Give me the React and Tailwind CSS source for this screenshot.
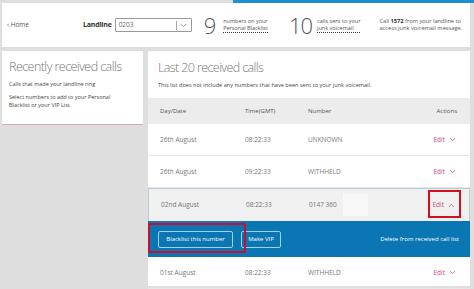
import { ChevronDown, ChevronUp } from 'lucide-react';

const rows = [
  { date: '26th August', time: '08:22:33', number: 'UNKNOWN' },
  { date: '26th August', time: '09:22:33', number: 'WITHHELD' },
];

function EditLink({ open }) {
  return (
    <span className="flex items-center gap-[3px] text-[#d0467f] text-[6.5px]">
      Edit
      {open ? <ChevronUp size={9} strokeWidth={2} /> : <ChevronDown size={9} strokeWidth={2} />}
    </span>
  );
}

function Row({ date, time, number, open, children }) {
  return (
    <div className={`flex items-center h-[32px] pl-[12px] pr-[13px] text-[6.5px] text-[#777] ${open ? 'bg-[#f0f0f0]' : 'border-b border-[#e6e6e6]'}`}>
      <span className="w-[85px]">{date}</span>
      <span className="w-[63px]">{time}</span>
      <span className="flex-1 flex items-center">{number}{children}</span>
      <EditLink open={open} />
    </div>
  );
}

export default function App() {
  return (
    <div className="w-[474px] h-[289px] bg-[#dedede] relative overflow-hidden font-['Open_Sans',sans-serif]">
      <div className="flex h-[3px]">
        <div className="w-[233px]" />
        <div className="flex-1 bg-[#1d8fcf]" />
      </div>

      {/* header bar */}
      <div className="mx-[2px] mr-[4px] h-[44px] bg-white flex items-center">
        <span className="ml-[5px] text-[6.5px] text-[#555] w-[76px]">‹ Home</span>
        <span className="text-[7px] font-bold text-[#333] tracking-[-0.2px]">Landline</span>
        <div className="ml-[3px] w-[77px] h-[14px] border border-[#999] rounded-[1px] flex items-center">
          <span className="flex-1 pl-[3px] text-[6.5px] text-[#666]">0203</span>
          <span className="w-px h-[9px] bg-[#aaa]" />
          <span className="w-[14px] flex justify-center text-[#555]"><ChevronDown size={9} strokeWidth={1.5} /></span>
        </div>
        <span className="ml-[12px] text-[22px] font-light text-[#555] leading-none">9</span>
        <div className="ml-[7px] text-[5.5px] leading-[8px] text-[#555]">
          <div>numbers on your</div>
          <div className="border-b border-dotted border-[#333] leading-[7px]">Personal Blacklist</div>
        </div>
        <span className="ml-[21px] text-[22px] font-light text-[#555] leading-none tracking-[-1px]">10</span>
        <div className="ml-[5px] text-[5.5px] leading-[8px] text-[#555]">
          <div>calls sent to your</div>
          <div className="border-b border-dotted border-[#333] leading-[7px]">junk voicemail</div>
        </div>
        <div className="ml-[19px] text-[5.7px] leading-[7px] text-[#555]">
          <div>Call <b className="text-[#333]">1572</b> from your landline to</div>
          <div>access junk voicemail message.</div>
        </div>
      </div>

      <div className="flex mt-[4px] ml-[2px]">
        {/* left panel */}
        <div className="w-[141px] h-[74px] bg-white border-b border-[#e0a7b0] pl-[7px] pt-[7px]">
          <div className="text-[12.5px] font-light text-[#777] tracking-[-0.55px] leading-[18px]">Recently received calls</div>
          <div className="mt-[5px] text-[5.5px] text-[#444] leading-[7px]">Calls that made your landline ring</div>
          <div className="mt-[5px] text-[5.5px] text-[#444] leading-[8px]">Select numbers to add to your Personal<br />Blacklist or your VIP List.</div>
        </div>

        {/* right panel */}
        <div className="ml-[5px] w-[322px] h-[235px] bg-white relative">
          <div className="pl-[10px] pt-[8px] h-[47px]">
            <div className="text-[12.5px] font-light text-[#777] tracking-[-0.6px] leading-[18px]">Last 20 received calls</div>
            <div className="mt-[4px] text-[5.6px] text-[#444]">This list does not include any numbers that have been sent to your junk voicemail.</div>
          </div>
          <div className="flex items-center h-[26px] bg-[#ececec] pl-[12px] pr-[13px] text-[6px] text-[#555]">
            <span className="w-[85px]">Day/Date</span>
            <span className="w-[63px]">Time(GMT)</span>
            <span className="flex-1">Number</span>
            <span>Actions</span>
          </div>
          {rows.map((r, i) => <Row key={i} {...r} />)}
          <div className="border border-[#b9cbd6] border-b-0">
            <Row date="02nd August" time="08:22:33" number="0147 360" open>
              <span className="ml-[6px] w-[25px] h-[22px] bg-[#f8f8f8]" />
            </Row>
          </div>
          <div className="h-[36px] bg-[#0b76b4] flex items-center pl-[10px] pr-[11px]">
            <button className="w-[75px] h-[17px] border border-[#9fd0ec] rounded-[2px] text-white text-[6px]">Blacklist this number</button>
            <button className="ml-[8px] w-[40px] h-[17px] border border-[#9fd0ec] rounded-[2px] text-white text-[6px]">Make VIP</button>
            <span className="ml-auto text-white text-[6px]">Delete from received call list</span>
          </div>
          <Row date="01st August" time="08:22:33" number="WITHHELD" />

          {/* annotation boxes */}
          <div className="absolute left-[280px] top-[139px] w-[33px] h-[28px] border-2 border-[#d0101e]" />
          <div className="absolute left-[0px] top-[172px] w-[98px] h-[30px] border-2 border-[#c8102e] rounded-[1px]" />
        </div>
      </div>
    </div>
  );
}
